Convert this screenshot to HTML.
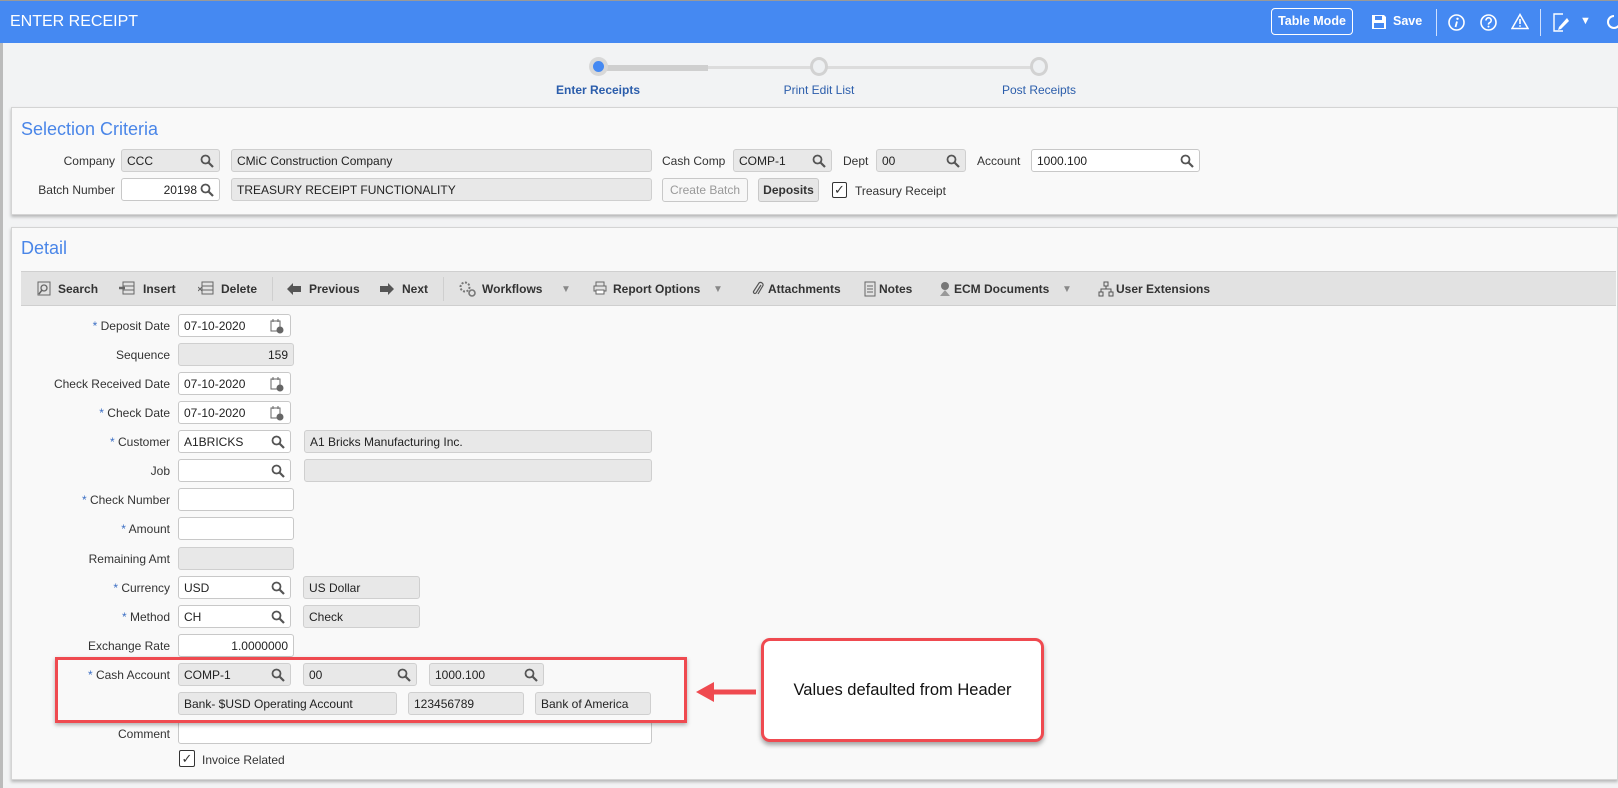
<!DOCTYPE html>
<html><head><meta charset="utf-8"><style>
*{box-sizing:border-box;margin:0;padding:0}
body{width:1618px;height:788px;overflow:hidden;background:#f2f3f4;font-family:"Liberation Sans",Arial,sans-serif;font-size:12px;color:#333;position:relative}
.a{position:absolute}
.hdr{left:0;top:0;width:1618px;height:43px;background:#4589f2;border-top:1px solid #999}
.lbl{position:absolute;text-align:right;font-size:12px;color:#333;line-height:14px}
.in{position:absolute;height:23px;border:1px solid #c8c8c8;border-radius:3px;background:#fff;font-size:12px;line-height:22px;padding:0 5px;color:#222;white-space:nowrap}
.ro{background:#e8e8e8;border-color:#cfcfcf}
.r{text-align:right}
.mag{position:absolute;right:5px;top:4px}
.panel{position:absolute;background:#f9f9f9;border:1px solid #d4d4d4;box-shadow:0 2px 3px rgba(0,0,0,.25)}
.ttl{position:absolute;color:#4a86e8;font-size:18px}
.tb{position:absolute;top:271px;left:21px;width:1595px;height:35px;background:#e2e2e2;border-top:1px solid #cfcfcf;border-bottom:1px solid #cfcfcf}
.ti{position:absolute;top:10px;font-weight:bold;font-size:12px;color:#333;white-space:nowrap}
.ic{position:absolute;top:9px}
.cal{position:absolute;right:6px;top:3px}
.btn{position:absolute;border:1px solid #c8c8c8;border-radius:3px;font-size:12px;line-height:22px;text-align:center}
</style></head><body>
<div class="a" style="left:0;top:0;width:3px;height:788px;background:#bbb"></div>
<div class="a hdr">
 <div class="a" style="left:10px;top:12px;color:#fff;font-size:16px">ENTER RECEIPT</div>
 <div class="a" style="left:1271px;top:7px;width:82px;height:27px;border:1px solid #fff;border-radius:4px;color:#fff;font-weight:bold;font-size:12.5px;text-align:center;line-height:25px">Table Mode</div>
 <svg class="a" style="left:1371px;top:13px" width="16" height="16" viewBox="0 0 16 16"><path d="M1 1h12l2 2v12H1z" fill="#fff"/><rect x="4" y="2" width="7" height="4" fill="#4589f2"/><rect x="3" y="9" width="10" height="5" fill="#4589f2"/></svg>
 <div class="a" style="left:1393px;top:13px;color:#fff;font-weight:bold;font-size:12.5px">Save</div>
 <div class="a" style="left:1436px;top:8px;width:1px;height:27px;background:#cfe0ff"></div>
 <svg class="a" style="left:1448px;top:13px" width="17" height="17" viewBox="0 0 17 17"><circle cx="8.5" cy="8.5" r="7.5" fill="none" stroke="#fff" stroke-width="1.6"/><circle cx="9.5" cy="4.8" r="1.2" fill="#fff"/><path d="M9 7.5 7.5 13" stroke="#fff" stroke-width="1.8"/></svg>
 <svg class="a" style="left:1480px;top:13px" width="17" height="17" viewBox="0 0 17 17"><circle cx="8.5" cy="8.5" r="7.5" fill="none" stroke="#fff" stroke-width="1.6"/><path d="M6 6.5a2.6 2.6 0 1 1 3.5 2.3c-.9.4-1 .9-1 1.8" fill="none" stroke="#fff" stroke-width="1.6"/><circle cx="8.5" cy="12.6" r="1" fill="#fff"/></svg>
 <svg class="a" style="left:1511px;top:12px" width="18" height="17" viewBox="0 0 18 17"><path d="M9 1.5 17 15.5H1z" fill="none" stroke="#fff" stroke-width="1.5"/><path d="M9 6v5" stroke="#fff" stroke-width="1.6"/><circle cx="9" cy="13" r=".9" fill="#fff"/></svg>
 <div class="a" style="left:1540px;top:8px;width:1px;height:27px;background:#cfe0ff"></div>
 <svg class="a" style="left:1553px;top:12px" width="16" height="19" viewBox="0 0 16 19"><path d="M10 1H1v17h9" fill="none" stroke="#fff" stroke-width="1.4"/><path d="M14 5 6 14l-1 3 3-1 8-8z" fill="#fff"/></svg>
 <div class="a" style="left:1580px;top:14px;color:#fff;font-size:11px">▼</div>
 <svg class="a" style="left:1606px;top:12px" width="16" height="18" viewBox="0 0 16 18"><path d="M8 3a6 6 0 1 0 6 6" fill="none" stroke="#fff" stroke-width="2"/></svg>
</div>
<!-- stepper -->
<div class="a" style="left:598px;top:65px;width:110px;height:6px;background:#cfcfcf"></div>
<div class="a" style="left:708px;top:66px;width:331px;height:3px;background:#dcdcdc"></div>
<div class="a" style="left:589px;top:57px;width:19px;height:19px;border-radius:50%;background:#d8d8d8"></div>
<div class="a" style="left:593px;top:61px;width:11px;height:11px;border-radius:50%;background:#4589f2"></div>
<div class="a" style="left:810px;top:57px;width:18px;height:19px;border-radius:50%;background:#eef0f2;border:3px solid #d2d2d2"></div>
<div class="a" style="left:1030px;top:57px;width:18px;height:19px;border-radius:50%;background:#eef0f2;border:3px solid #d2d2d2"></div>
<div class="a" style="left:548px;top:83px;width:100px;text-align:center;color:#2b5dab;font-size:12px;font-weight:bold">Enter Receipts</div>
<div class="a" style="left:769px;top:83px;width:100px;text-align:center;color:#2b5dab;font-size:12px">Print Edit List</div>
<div class="a" style="left:989px;top:83px;width:100px;text-align:center;color:#2b5dab;font-size:12px">Post Receipts</div>

<div class="panel" style="left:11px;top:107px;width:1607px;height:108px"></div>
<div class="ttl" style="left:21px;top:119px">Selection Criteria</div>
<div class="lbl" style="left:40px;top:154px;width:75px">Company</div>
<div class="in ro" style="left:121px;top:149px;width:99px">CCC<svg class="mag" width="14" height="14" viewBox="0 0 14 14"><circle cx="5.5" cy="5.5" r="4" fill="none" stroke="#555" stroke-width="1.8"/><path d="M8.5 8.5 13 13" stroke="#555" stroke-width="2.2"/></svg></div>
<div class="in ro" style="left:231px;top:149px;width:421px">CMiC Construction Company</div>
<div class="lbl" style="left:20px;top:183px;width:95px">Batch Number</div>
<div class="in r" style="left:121px;top:178px;width:99px;padding-right:22px">20198<svg class="mag" width="14" height="14" viewBox="0 0 14 14"><circle cx="5.5" cy="5.5" r="4" fill="none" stroke="#555" stroke-width="1.8"/><path d="M8.5 8.5 13 13" stroke="#555" stroke-width="2.2"/></svg></div>
<div class="in ro" style="left:231px;top:178px;width:421px">TREASURY RECEIPT FUNCTIONALITY</div>
<div class="lbl" style="left:662px;top:154px">Cash Comp</div>
<div class="in ro" style="left:733px;top:149px;width:99px">COMP-1<svg class="mag" width="14" height="14" viewBox="0 0 14 14"><circle cx="5.5" cy="5.5" r="4" fill="none" stroke="#555" stroke-width="1.8"/><path d="M8.5 8.5 13 13" stroke="#555" stroke-width="2.2"/></svg></div>
<div class="lbl" style="left:843px;top:154px">Dept</div>
<div class="in ro" style="left:876px;top:149px;width:90px">00<svg class="mag" width="14" height="14" viewBox="0 0 14 14"><circle cx="5.5" cy="5.5" r="4" fill="none" stroke="#555" stroke-width="1.8"/><path d="M8.5 8.5 13 13" stroke="#555" stroke-width="2.2"/></svg></div>
<div class="lbl" style="left:977px;top:154px">Account</div>
<div class="in" style="left:1031px;top:149px;width:169px">1000.100<svg class="mag" width="14" height="14" viewBox="0 0 14 14"><circle cx="5.5" cy="5.5" r="4" fill="none" stroke="#555" stroke-width="1.8"/><path d="M8.5 8.5 13 13" stroke="#555" stroke-width="2.2"/></svg></div>
<div class="btn" style="left:662px;top:178px;width:86px;height:24px;color:#999;background:#f7f7f7">Create Batch</div>
<div class="btn" style="left:758px;top:178px;width:61px;height:24px;background:#e6e6e6;font-weight:bold;color:#333">Deposits</div>
<div class="a" style="left:832px;top:182px;width:15px;height:16px;border:1px solid #333;border-radius:2px;background:#fff;font-size:13px;line-height:14px;text-align:center">✓</div>
<div class="lbl" style="left:855px;top:184px">Treasury Receipt</div>

<div class="panel" style="left:11px;top:227px;width:1607px;height:553px"></div>
<div class="ttl" style="left:21px;top:238px">Detail</div>
<div class="tb">
 <svg class="ic" style="left:16px" width="14" height="15" viewBox="0 0 14 15"><rect x="1" y="1" width="12" height="13" fill="none" stroke="#666"/><circle cx="7" cy="7" r="3" fill="none" stroke="#666" stroke-width="1.3"/><path d="M5 9 2 13" stroke="#666" stroke-width="1.5"/></svg>
 <div class="ti" style="left:37px">Search</div>
 <svg class="ic" style="left:98px" width="16" height="14" viewBox="0 0 16 14"><rect x="4" y="1" width="11" height="12" fill="none" stroke="#666"/><path d="M4 5h11M4 9h11" stroke="#666"/><path d="M0 7h6" stroke="#666" stroke-width="2.5"/></svg>
 <div class="ti" style="left:122px">Insert</div>
 <svg class="ic" style="left:177px" width="16" height="14" viewBox="0 0 16 14"><rect x="4" y="1" width="11" height="12" fill="none" stroke="#666"/><path d="M4 5h11M4 9h11M0 6l4 4M4 6 0 10" stroke="#666"/></svg>
 <div class="ti" style="left:200px">Delete</div>
 <div class="a" style="left:251px;top:5px;width:1px;height:24px;background:#cfcfcf"></div>
 <svg class="ic" style="left:266px;top:11px" width="14" height="12" viewBox="0 0 14 12"><path d="M0 6 6 0v3h8v6H6v3z" fill="#555"/></svg>
 <div class="ti" style="left:288px">Previous</div>
 <svg class="ic" style="left:359px;top:11px" width="14" height="12" viewBox="0 0 14 12"><path d="M14 6 8 0v3H0v6h8v3z" fill="#555"/></svg>
 <div class="ti" style="left:381px">Next</div>
 <div class="a" style="left:422px;top:5px;width:1px;height:24px;background:#cfcfcf"></div>
 <svg class="ic" style="left:438px" width="18" height="16" viewBox="0 0 18 16"><circle cx="6" cy="6" r="4.5" fill="none" stroke="#777" stroke-width="2" stroke-dasharray="2 1.5"/><circle cx="13" cy="12" r="3" fill="none" stroke="#777" stroke-width="1.6"/></svg>
 <div class="ti" style="left:461px">Workflows</div>
 <div class="ti" style="left:540px;color:#888;font-size:10px;top:12px">▼</div>
 <svg class="ic" style="left:572px" width="14" height="14" viewBox="0 0 14 14"><rect x="3" y="1" width="8" height="4" fill="none" stroke="#666"/><rect x="1" y="5" width="12" height="5" fill="none" stroke="#666"/><rect x="3" y="9" width="8" height="4" fill="#fff" stroke="#666"/></svg>
 <div class="ti" style="left:592px">Report Options</div>
 <div class="ti" style="left:692px;color:#888;font-size:10px;top:12px">▼</div>
 <svg class="ic" style="left:731px" width="12" height="16" viewBox="0 0 12 16"><path d="M9 4 4 12a1.5 1.5 0 0 1-2.5-1.5L7 2a2.5 2.5 0 0 1 4 2.5L6 13" fill="none" stroke="#555" stroke-width="1.2"/></svg>
 <div class="ti" style="left:747px">Attachments</div>
 <svg class="ic" style="left:843px" width="12" height="16" viewBox="0 0 12 16"><rect x="1" y="1" width="10" height="14" fill="none" stroke="#666"/><path d="M3 5h6M3 8h6M3 11h6" stroke="#666"/></svg>
 <div class="ti" style="left:858px">Notes</div>
 <svg class="ic" style="left:917px" width="14" height="16" viewBox="0 0 14 16"><circle cx="7" cy="5" r="4" fill="#777"/><path d="M2 15l5-6 5 6z" fill="#999"/></svg>
 <div class="ti" style="left:933px">ECM Documents</div>
 <div class="ti" style="left:1041px;color:#888;font-size:10px;top:12px">▼</div>
 <svg class="ic" style="left:1077px" width="16" height="16" viewBox="0 0 16 16"><rect x="6" y="1" width="4" height="4" fill="none" stroke="#555"/><rect x="1" y="11" width="4" height="4" fill="none" stroke="#555"/><rect x="11" y="11" width="4" height="4" fill="none" stroke="#555"/><path d="M8 5v3M3 11V8h10v3" fill="none" stroke="#555"/></svg>
 <div class="ti" style="left:1095px">User Extensions</div>
</div>

<!-- detail fields -->
<div class="lbl" style="left:20px;top:319px;width:150px"><span style="color:#3c6fc4">*</span> Deposit Date</div>
<div class="in" style="left:178px;top:314px;width:113px">07-10-2020<svg class="cal" width="14" height="16" viewBox="0 0 14 16"><rect x="1" y="3" width="9" height="10" fill="none" stroke="#666"/><path d="M3 1v3M8 1v3" stroke="#666"/><circle cx="10" cy="12" r="3.5" fill="#666"/></svg></div>
<div class="lbl" style="left:20px;top:348px;width:150px">Sequence</div>
<div class="in ro r" style="left:178px;top:343px;width:116px">159</div>
<div class="lbl" style="left:20px;top:377px;width:150px">Check Received Date</div>
<div class="in" style="left:178px;top:372px;width:113px">07-10-2020<svg class="cal" width="14" height="16" viewBox="0 0 14 16"><rect x="1" y="3" width="9" height="10" fill="none" stroke="#666"/><path d="M3 1v3M8 1v3" stroke="#666"/><circle cx="10" cy="12" r="3.5" fill="#666"/></svg></div>
<div class="lbl" style="left:20px;top:406px;width:150px"><span style="color:#3c6fc4">*</span> Check Date</div>
<div class="in" style="left:178px;top:401px;width:113px">07-10-2020<svg class="cal" width="14" height="16" viewBox="0 0 14 16"><rect x="1" y="3" width="9" height="10" fill="none" stroke="#666"/><path d="M3 1v3M8 1v3" stroke="#666"/><circle cx="10" cy="12" r="3.5" fill="#666"/></svg></div>
<div class="lbl" style="left:20px;top:435px;width:150px"><span style="color:#3c6fc4">*</span> Customer</div>
<div class="in" style="left:178px;top:430px;width:113px">A1BRICKS<svg class="mag" width="14" height="14" viewBox="0 0 14 14"><circle cx="5.5" cy="5.5" r="4" fill="none" stroke="#555" stroke-width="1.8"/><path d="M8.5 8.5 13 13" stroke="#555" stroke-width="2.2"/></svg></div>
<div class="in ro" style="left:304px;top:430px;width:348px">A1 Bricks Manufacturing Inc.</div>
<div class="lbl" style="left:20px;top:464px;width:150px">Job</div>
<div class="in" style="left:178px;top:459px;width:113px"><svg class="mag" width="14" height="14" viewBox="0 0 14 14"><circle cx="5.5" cy="5.5" r="4" fill="none" stroke="#555" stroke-width="1.8"/><path d="M8.5 8.5 13 13" stroke="#555" stroke-width="2.2"/></svg></div>
<div class="in ro" style="left:304px;top:459px;width:348px"></div>
<div class="lbl" style="left:20px;top:493px;width:150px"><span style="color:#3c6fc4">*</span> Check Number</div>
<div class="in" style="left:178px;top:488px;width:116px"></div>
<div class="lbl" style="left:20px;top:522px;width:150px"><span style="color:#3c6fc4">*</span> Amount</div>
<div class="in" style="left:178px;top:517px;width:116px"></div>
<div class="lbl" style="left:20px;top:552px;width:150px">Remaining Amt</div>
<div class="in ro" style="left:178px;top:547px;width:116px"></div>
<div class="lbl" style="left:20px;top:581px;width:150px"><span style="color:#3c6fc4">*</span> Currency</div>
<div class="in" style="left:178px;top:576px;width:113px">USD<svg class="mag" width="14" height="14" viewBox="0 0 14 14"><circle cx="5.5" cy="5.5" r="4" fill="none" stroke="#555" stroke-width="1.8"/><path d="M8.5 8.5 13 13" stroke="#555" stroke-width="2.2"/></svg></div>
<div class="in ro" style="left:303px;top:576px;width:117px">US Dollar</div>
<div class="lbl" style="left:20px;top:610px;width:150px"><span style="color:#3c6fc4">*</span> Method</div>
<div class="in" style="left:178px;top:605px;width:113px">CH<svg class="mag" width="14" height="14" viewBox="0 0 14 14"><circle cx="5.5" cy="5.5" r="4" fill="none" stroke="#555" stroke-width="1.8"/><path d="M8.5 8.5 13 13" stroke="#555" stroke-width="2.2"/></svg></div>
<div class="in ro" style="left:303px;top:605px;width:117px">Check</div>
<div class="lbl" style="left:20px;top:639px;width:150px">Exchange Rate</div>
<div class="in r" style="left:178px;top:634px;width:116px">1.0000000</div>
<div class="lbl" style="left:20px;top:668px;width:150px"><span style="color:#3c6fc4">*</span> Cash Account</div>
<div class="in ro" style="left:178px;top:663px;width:113px">COMP-1<svg class="mag" width="14" height="14" viewBox="0 0 14 14"><circle cx="5.5" cy="5.5" r="4" fill="none" stroke="#555" stroke-width="1.8"/><path d="M8.5 8.5 13 13" stroke="#555" stroke-width="2.2"/></svg></div>
<div class="in ro" style="left:303px;top:663px;width:114px">00<svg class="mag" width="14" height="14" viewBox="0 0 14 14"><circle cx="5.5" cy="5.5" r="4" fill="none" stroke="#555" stroke-width="1.8"/><path d="M8.5 8.5 13 13" stroke="#555" stroke-width="2.2"/></svg></div>
<div class="in ro" style="left:429px;top:663px;width:115px">1000.100<svg class="mag" width="14" height="14" viewBox="0 0 14 14"><circle cx="5.5" cy="5.5" r="4" fill="none" stroke="#555" stroke-width="1.8"/><path d="M8.5 8.5 13 13" stroke="#555" stroke-width="2.2"/></svg></div>
<div class="in ro" style="left:178px;top:692px;width:219px">Bank- $USD Operating Account</div>
<div class="in ro" style="left:408px;top:692px;width:116px">123456789</div>
<div class="in ro" style="left:535px;top:692px;width:116px">Bank of America</div>
<div class="lbl" style="left:20px;top:727px;width:150px">Comment</div>
<div class="in" style="left:178px;top:721px;width:474px"></div>
<div class="a" style="left:179px;top:750px;width:16px;height:17px;border:1px solid #333;border-radius:2px;background:#fff;font-size:13px;line-height:15px;text-align:center">✓</div>
<div class="lbl" style="left:202px;top:753px">Invoice Related</div>

<!-- annotation -->
<div class="a" style="left:55px;top:657px;width:632px;height:66px;border:3px solid #ef4a50;box-shadow:0 2px 4px rgba(0,0,0,.3)"></div>
<svg class="a" style="left:694px;top:680px" width="64" height="24" viewBox="0 0 64 24"><path d="M62 12H16" stroke="#ef4a50" stroke-width="5"/><path d="M2 12 20 2v20z" fill="#ef4a50"/></svg>
<div class="a" style="left:761px;top:638px;width:283px;height:104px;border:3px solid #ef4a50;border-radius:9px;background:#fff;box-shadow:0 3px 5px rgba(0,0,0,.35);text-align:center;line-height:98px;font-size:16.5px;color:#111">Values defaulted from Header</div>
</body></html>
